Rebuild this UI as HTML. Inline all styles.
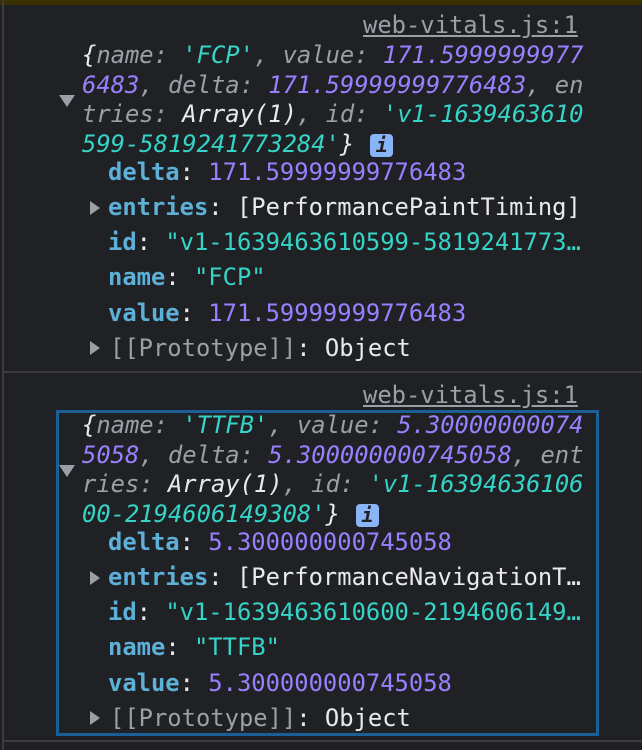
<!DOCTYPE html>
<html><head><meta charset="utf-8"><style>
html,body{margin:0;padding:0;}
body{width:642px;height:750px;background:#202124;position:relative;overflow:hidden;font-family:"DejaVu Sans Mono","Liberation Mono",monospace;font-size:23.8px;color:#e8eaed;}
.l{position:absolute;white-space:pre;line-height:30px;}
.g{color:#9aa0a6;font-style:italic}
.s{color:#35d4c7}
.n{color:#9980ff}
.k{color:#5db0d7;font-weight:bold}
.p{color:#9aa0a6}
.w{color:#e8eaed}
.it{font-style:italic}
.link{color:#9aa0a6;text-decoration:underline;}
.tri{position:absolute;width:0;height:0;}
.down{border-left:8px solid transparent;border-right:8px solid transparent;border-top:12px solid #9aa0a6;}
.right{border-top:7px solid transparent;border-bottom:7px solid transparent;border-left:10px solid #9aa0a6;}
.info{display:inline-block;width:23px;height:23px;background:#8ab4f8;border-radius:4px;color:#202124;font-style:italic;font-weight:bold;text-align:center;line-height:23px;font-size:20px;vertical-align:0px;margin-left:16px;}
</style></head><body>
<div style="position:absolute;left:0;top:0;width:642px;height:5px;background:#3a3000"></div>
<div style="position:absolute;left:2px;top:0;width:2px;height:750px;background:#3c3c3c"></div>
<div style="position:absolute;left:4px;top:371px;width:638px;height:2px;background:#3c3c3c"></div>
<div style="position:absolute;left:4px;top:740px;width:638px;height:2px;background:#3c3c3c"></div>

<div class="l link" style="left:363px;top:10px">web-vitals.js:1</div>
<div class="l it" style="left:82px;top:40px"><span class="w">{</span><span class="g">name: </span><span class="s">'FCP'</span><span class="g">, value: </span><span class="n">171.5999999977</span></div>
<div class="l it" style="left:82px;top:70px"><span class="n">6483</span><span class="g">, delta: </span><span class="n">171.59999999776483</span><span class="g">, en</span></div>
<div class="l it" style="left:82px;top:99px"><span class="g">tries: </span><span class="w">Array(1)</span><span class="g">, id: </span><span class="s">'v1-1639463610</span></div>
<div class="l it" style="left:82px;top:129px"><span class="s">599-5819241773284'</span><span class="w">}</span><span class="info">i</span></div>
<div class="tri down" style="left:59px;top:95px"></div>
<div class="l" style="left:108px;top:157px"><span class="k">delta</span>: <span class="n">171.59999999776483</span></div>
<div class="tri right" style="left:90px;top:201px"></div>
<div class="l" style="left:108px;top:192px"><span class="k">entries</span>: [PerformancePaintTiming]</div>
<div class="l" style="left:108px;top:227px"><span class="k">id</span>: <span class="s">"v1-1639463610599-5819241773…</span></div>
<div class="l" style="left:108px;top:262px"><span class="k">name</span>: <span class="s">"FCP"</span></div>
<div class="l" style="left:108px;top:298px"><span class="k">value</span>: <span class="n">171.59999999776483</span></div>
<div class="tri right" style="left:90px;top:341px"></div>
<div class="l" style="left:110px;top:333px"><span class="p">[[Prototype]]</span>: Object</div>

<div class="l link" style="left:363px;top:380px">web-vitals.js:1</div>
<div style="position:absolute;left:56px;top:410px;width:537px;height:320px;border:3px solid #1a5f95"></div>
<div class="l it" style="left:82px;top:410px"><span class="w">{</span><span class="g">name: </span><span class="s">'TTFB'</span><span class="g">, value: </span><span class="n">5.30000000074</span></div>
<div class="l it" style="left:82px;top:440px"><span class="n">5058</span><span class="g">, delta: </span><span class="n">5.300000000745058</span><span class="g">, ent</span></div>
<div class="l it" style="left:82px;top:469px"><span class="g">ries: </span><span class="w">Array(1)</span><span class="g">, id: </span><span class="s">'v1-16394636106</span></div>
<div class="l it" style="left:82px;top:499px"><span class="s">00-2194606149308'</span><span class="w">}</span><span class="info">i</span></div>
<div class="tri down" style="left:59px;top:465px"></div>
<div class="l" style="left:108px;top:527px"><span class="k">delta</span>: <span class="n">5.300000000745058</span></div>
<div class="tri right" style="left:90px;top:571px"></div>
<div class="l" style="left:108px;top:562px"><span class="k">entries</span>: [PerformanceNavigationT…</div>
<div class="l" style="left:108px;top:597px"><span class="k">id</span>: <span class="s">"v1-1639463610600-2194606149…</span></div>
<div class="l" style="left:108px;top:632px"><span class="k">name</span>: <span class="s">"TTFB"</span></div>
<div class="l" style="left:108px;top:668px"><span class="k">value</span>: <span class="n">5.300000000745058</span></div>
<div class="tri right" style="left:90px;top:711px"></div>
<div class="l" style="left:110px;top:703px"><span class="p">[[Prototype]]</span>: Object</div>
</body></html>
